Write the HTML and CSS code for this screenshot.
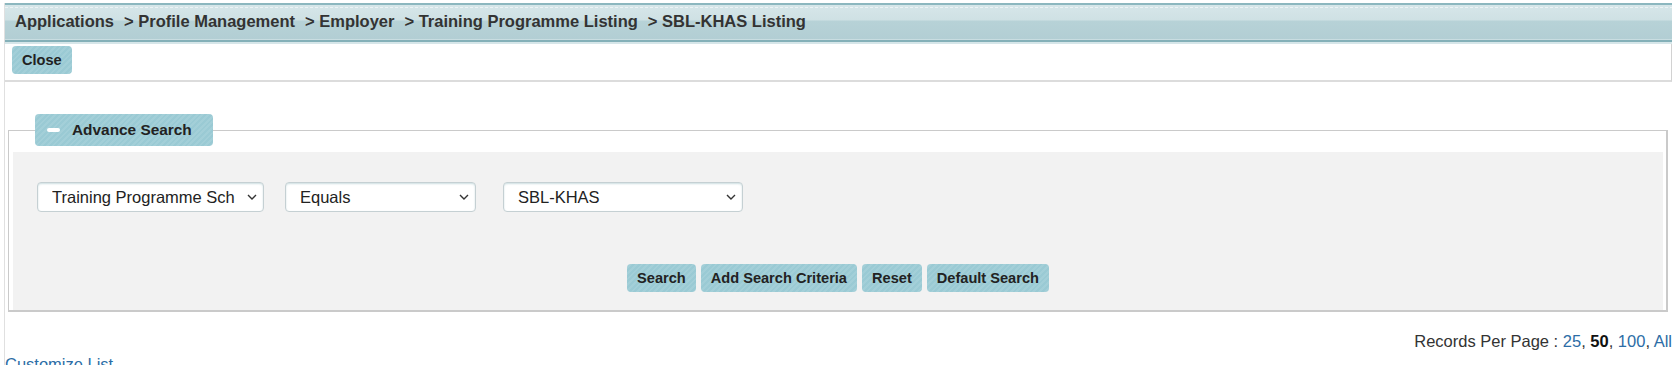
FILE: index.html
```html
<!DOCTYPE html>
<html lang="en">
<head>
<meta charset="utf-8">
<title>SBL-KHAS Listing</title>
<link rel="stylesheet" href="styles.css">
</head>
<body>
<div class="page">
  <div class="header">
    <div class="crumbs">
      <span class="crumb">Applications</span>
      <span class="crumb">&gt; Profile Management</span>
      <span class="crumb">&gt; Employer</span>
      <span class="crumb">&gt; Training Programme Listing</span>
      <span class="crumb">&gt; SBL-KHAS Listing</span>
    </div>
    <div class="header-rule"></div>
  </div>

  <div class="toolbar">
    <button class="btn" type="button">Close</button>
  </div>

  <fieldset class="adv">
    <legend class="adv-legend"><span class="legend-box"><span class="minus"></span>Advance Search</span></legend>
    <div class="adv-body">
      <div class="criteria">
        <div class="sel sel-field">
          <select><option>Training Programme Sch</option></select>
          <svg class="chev" width="10" height="6" viewBox="0 0 10 6"><polyline points="1,1 5,5 9,1" fill="none" stroke="#333" stroke-width="1.4"/></svg>
        </div>
        <div class="sel sel-op">
          <select><option>Equals</option></select>
          <svg class="chev" width="10" height="6" viewBox="0 0 10 6"><polyline points="1,1 5,5 9,1" fill="none" stroke="#333" stroke-width="1.4"/></svg>
        </div>
        <div class="sel sel-val">
          <select><option>SBL-KHAS</option></select>
          <svg class="chev" width="10" height="6" viewBox="0 0 10 6"><polyline points="1,1 5,5 9,1" fill="none" stroke="#333" stroke-width="1.4"/></svg>
        </div>
      </div>
      <div class="actions">
        <button class="btn" type="button">Search</button>
        <button class="btn" type="button">Add Search Criteria</button>
        <button class="btn" type="button">Reset</button>
        <button class="btn" type="button">Default Search</button>
      </div>
    </div>
  </fieldset>

  <div class="rpp">Records Per Page : <a href="#">25</a>, <b>50</b>, <a href="#">100</a>, <a href="#">All</a></div>
  <a class="customize" href="#">Customize List</a>
</div>
</body>
</html>
```

FILE: styles.css
```css
html, body {
  margin: 0;
  padding: 0;
  background: #fff;
}
body {
  font-family: "Liberation Sans", Arial, sans-serif;
  color: #333;
  overflow: hidden;
}
.page {
  margin: 3px 3px 0 4px;
  border-left: 1px solid #e0e0e0;
  min-height: 362px;
}

/* header / breadcrumb */
.header {
  border-top: 2px solid #8cb7bf;
  background:
    repeating-linear-gradient(90deg, rgba(255,255,255,0.55) 0 3px, transparent 3px 5px) 0 2px / 100% 1px no-repeat,
    linear-gradient(#d6e6e9 0, #cfe1e4 15px, #b7d2d7 16px, #b1cdd3 100%);
}
.crumbs {
  height: 32px;
  padding: 0 0 2px 10px;
  line-height: 32px;
  font-size: 16.5px;
  font-weight: bold;
  color: #333;
  white-space: nowrap;
  display: flex;
}
.crumb + .crumb {
  margin-left: 10px;
}
.header-rule {
  height: 5px;
  background: linear-gradient(#c9dde1 0 1px, #84b0b8 1px 3px, #d6e6e9 3px 5px);
}

/* toolbar */
.toolbar {
  height: 34px;
  padding: 2px 0 0 7px;
  border-right: 1px solid #d2d2d2;
  border-bottom: 2px solid #dcdcdc;
  background: #fff;
}

.btn {
  display: inline-block;
  height: 28px;
  padding: 0 10px;
  border: 0;
  border-radius: 4px;
  font-family: "Liberation Sans", Arial, sans-serif;
  font-size: 14.6px;
  font-weight: bold;
  color: #222;
  background: repeating-linear-gradient(135deg, #9acad4 0 2px, #a3cfd8 2px 4px);
  vertical-align: top;
  cursor: pointer;
}

/* advance search fieldset */
.adv {
  margin: 32px 4px 0 3px;
  padding: 6px 3px 0 4px;
  border-style: solid;
  border-color: #cacaca;
  border-width: 1px 2px 2px 1px;
  min-width: 0;
}
.adv-legend {
  padding: 0;
  margin-left: 22px;
}
.legend-box {
  display: flex;
  align-items: center;
  height: 32px;
  padding: 0 21px 0 12px;
  border-radius: 4px;
  background: repeating-linear-gradient(135deg, #9acad4 0 2px, #a3cfd8 2px 4px);
  font-size: 15.4px;
  font-weight: bold;
  color: #222;
  white-space: nowrap;
}
.minus {
  width: 13px;
  height: 4px;
  border-radius: 2px;
  background: #fff;
  margin-right: 12px;
}
.adv-body {
  background: #f2f2f2;
  padding: 30px 0 18px 0;
}
.criteria {
  display: flex;
  padding-left: 24px;
}
.sel {
  position: relative;
  height: 30px;
}
.sel-field { width: 227px; }
.sel-op { width: 191px; margin-left: 21px; }
.sel-val { width: 240px; margin-left: 27px; }
.sel select {
  -webkit-appearance: none;
  appearance: none;
  width: 100%;
  height: 100%;
  margin: 0;
  box-sizing: border-box;
  border: 1px solid #c5d0d3;
  border-radius: 4px;
  background: #fff;
  box-shadow: inset 0 1px 2px rgba(110, 160, 170, 0.35);
  padding: 0 22px 0 14px;
  font-family: "Liberation Sans", Arial, sans-serif;
  font-size: 16.5px;
  color: #222;
  outline: none;
}
.chev {
  position: absolute;
  right: 7px;
  top: 12px;
  pointer-events: none;
}
.actions {
  display: flex;
  justify-content: center;
  gap: 5px;
  margin-top: 52px;
}

/* records per page */
.rpp {
  margin-top: 20px;
  text-align: right;
  font-size: 16.5px;
  line-height: 19px;
  color: #333;
}
.rpp a, .customize {
  color: #2c6da6;
  text-decoration: none;
}
.rpp b {
  color: #111;
}
.customize {
  display: block;
  margin-top: 4px;
  font-size: 16.5px;
  line-height: 19px;
}
```
